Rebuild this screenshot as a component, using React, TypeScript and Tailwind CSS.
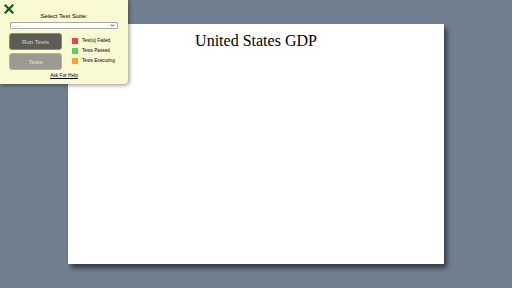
import { ChevronDown } from "lucide-react";

function Legend({ color, label }: { color: string; label: string }) {
  return (
    <div className="flex items-center gap-[4px] h-[10px]">
      <span className={`block h-[6px] w-[6px] ${color}`} />
      <span className="text-[4.7px] leading-none text-black">{label}</span>
    </div>
  );
}

function TestPanel() {
  return (
    <div className="absolute left-0 top-0 h-[84px] w-[128px] rounded-br-[4px] bg-[#fafad2] shadow-[1px_1px_4px_rgba(0,0,0,0.45)] font-['Liberation_Sans',Arial,sans-serif]">
      <div className="absolute left-[4px] top-[2px] leading-none">
        <svg width="10" height="10" viewBox="0 0 10 10" className="mt-[2px]">
          <path d="M1.5 1.5 L8.5 8.5 M8.5 1.5 L1.5 8.5" stroke="#0f5b12" strokeWidth="2.2" strokeLinecap="square" />
        </svg>
      </div>
      <div className="pt-[12px] text-center text-[6.1px] leading-[7px] text-black">Select Test Suite:</div>
      <div className="mx-[10px] mt-[3px] flex h-[7px] items-center justify-between rounded-[1px] border border-[#aaa] bg-white px-[2px]">
        <span className="text-[4px] leading-none text-[#444]">- - -</span>
        <ChevronDown className="h-[5px] w-[5px] text-black" strokeWidth={4} />
      </div>
      <div className="mt-[4px] flex pl-[9px]">
        <div className="flex flex-col gap-[3px]">
          <div className="flex h-[17px] w-[53px] items-center justify-center rounded-[3px] border border-[#8a8a80] bg-[#5e5d53] text-[6.1px] text-[#d8d8cc]">
            Run Tests
          </div>
          <div className="flex h-[17px] w-[53px] items-center justify-center rounded-[3px] border border-[#b0b0a8] bg-[#9b9b93] text-[6.1px] text-[#e0e0d8]">
            Tests
          </div>
        </div>
        <div className="ml-[10px] mt-[3px] flex flex-col">
          <Legend color="bg-[#ee4444]" label="Test(s) Failed" />
          <Legend color="bg-[#55d455]" label="Tests Passed" />
          <Legend color="bg-[#f5a623]" label="Tests Executing" />
        </div>
      </div>
      <div className="mt-[3px] text-center text-[4.8px] leading-[6px] text-black underline">Ask For Help</div>
    </div>
  );
}

export default function App() {
  return (
    <div className="relative h-[288px] w-[512px] overflow-hidden bg-[#708090]">
      <div className="flex justify-center pt-[24px]">
        <div className="h-[240px] w-[376px] bg-white pt-[8px] shadow-[3px_4px_5px_rgba(0,0,0,0.55)]">
          <h1 className="text-center font-['Liberation_Serif','Times_New_Roman',serif] text-[16px] leading-[18px] text-black">
            United States GDP
          </h1>
        </div>
      </div>
      <TestPanel />
    </div>
  );
}
